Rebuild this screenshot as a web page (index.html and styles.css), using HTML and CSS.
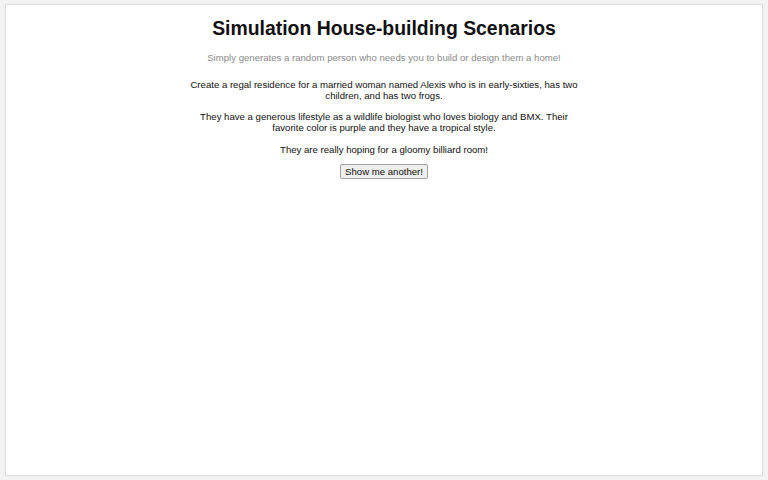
FILE: index.html
```html
<!DOCTYPE html>
<html lang="en">
<head>
<meta charset="utf-8">
<title>Simulation House-building Scenarios</title>
<link rel="stylesheet" href="styles.css">
</head>
<body>
<main class="card">
  <h1 class="title">Simulation House-building Scenarios</h1>
  <p class="subtitle">Simply generates a random person who needs you to build or design them a home!</p>
  <section class="scenario">
    <p>Create a regal residence for a married woman named Alexis who is in early-sixties, has two children, and has two frogs.</p>
    <p>They have a generous lifestyle as a wildlife biologist who loves biology and BMX. Their favorite color is purple and they have a tropical style.</p>
    <p>They are really hoping for a gloomy billiard room!</p>
  </section>
  <button class="again" type="button">Show me another!</button>
</main>
</body>
</html>
```

FILE: styles.css
```css
html, body {
  margin: 0;
  padding: 0;
}

body {
  background: #f3f3f3;
  font-family: "Liberation Sans", Arial, sans-serif;
  padding: 4px 5px 4px 5px;
  box-sizing: border-box;
  height: 480px;
}

.card {
  background: #ffffff;
  border: 1px solid #dedede;
  box-shadow: 0 0 2px rgba(0, 0, 0, 0.06);
  height: 100%;
  box-sizing: border-box;
  display: flex;
  flex-direction: column;
  align-items: center;
  text-align: center;
  padding-top: 12px;
}

.title {
  font-size: 19.4px;
  font-weight: bold;
  color: #111;
  margin: 0;
  line-height: 22px;
}

.subtitle {
  font-size: 9.6px;
  color: #8a8a8a;
  margin: 12.5px 0 0;
  line-height: 11px;
}

.scenario {
  max-width: 400px;
  margin-top: 5.5px;
}

.scenario p {
  font-size: 9.6px;
  line-height: 11px;
  color: #111;
  margin: 10.5px 0 0;
}

.again {
  margin-top: 9.5px;
  font-family: "Liberation Sans", Arial, sans-serif;
  font-size: 9.6px;
  color: #111;
  background: #efefef;
  border: 1px solid #a0a0a0;
  border-radius: 2px;
  padding: 1px 4px;
  line-height: 11px;
}
```
